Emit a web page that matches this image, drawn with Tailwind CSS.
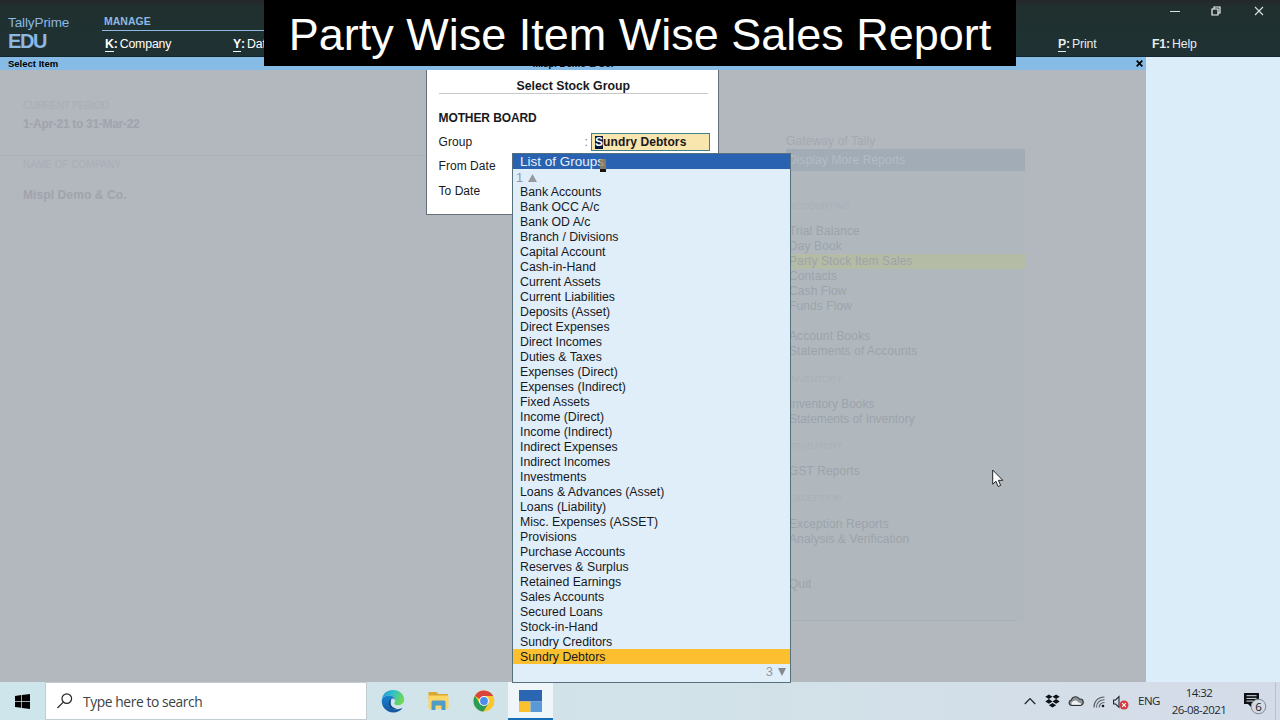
<!DOCTYPE html>
<html lang="en">

<head>
    <meta charset="UTF-8">
    <meta name="viewport" content="width=device-width, initial-scale=1.0">
    <script src="https://cdn.jsdelivr.net/npm/@tailwindcss/browser@4"></script>
    <title>TallyPrime EDU</title>
</head>

<body class="relative w-[1280px] h-[720px] overflow-hidden flex flex-col bg-[#b3b7be] font-['Liberation_Sans',sans-serif]">
    <!-- Top menu -->
    <header class="h-[57px] shrink-0 flex bg-linear-to-b from-[#24272c] via-[#20302f] via-15% to-[#1f3133] border-b border-[#14262e] text-white">
        <div class="w-[102px] pl-2 pt-[15px] text-[#8cb8e2]">
            <div class="text-[13.5px] leading-4 tracking-[-0.1px]">TallyPrime</div>
            <div class="text-[20px] leading-[20px] font-bold tracking-[-1.4px]">EDU</div>
        </div>
        <div class="w-[178px] pt-[14px]">
            <div class="h-[17px] pl-[2px] text-[10.5px] leading-[14px] font-bold text-[#8cb8e2] border-b border-[#8cb8e2]">MANAGE</div>
            <div class="flex pl-[3px] pt-[5px] text-[12.3px] leading-4 tracking-[-0.15px]">
                <div class="w-[128px] flex gap-[2px]"><b><span class="inline-block h-4 border-b border-white">K</span>:</b>Company</div>
                <div class="flex gap-[2px]"><b><span class="inline-block h-4 border-b border-white">Y</span>:</b>Data</div>
            </div>
        </div>
        <div class="ml-auto w-[222px] flex flex-col">
            <div class="h-[22px] flex items-center pl-[112px]">
                <svg class="w-[10px] h-[10px]" viewBox="0 0 10 10"><path d="M0 5.5h10" stroke="#dbe2e4"/></svg>
                <svg class="ml-[31px] w-[10px] h-[10px]" viewBox="0 0 10 10" fill="none" stroke="#f2f5f5" stroke-width="1.2"><path d="M1 3h6v6H1zM3 3V1h6v6H7"/></svg>
                <svg class="ml-[33px] w-[10px] h-[10px]" viewBox="0 0 10 10"><path d="M1 1l8 8M9 1L1 9" stroke="#dbe2e4" stroke-width="1.1"/></svg>
            </div>
            <div class="flex pt-[14px] text-[12.3px] leading-4 tracking-[-0.15px] text-[#e6eded]">
                <div class="w-[94px] flex gap-[2px]"><b><span class="inline-block h-4 border-b border-[#e6eded]">P</span>:</b>Print</div>
                <div class="flex gap-[2px]"><b>F1:</b>Help</div>
            </div>
        </div>
    </header>

    <main class="flex-1 flex min-h-0">
        <div class="w-[1146px] flex flex-col">
            <!-- Window title -->
            <div class="h-[13px] shrink-0 flex justify-between items-center bg-[#86bbe5] pl-2 pr-[3px] text-[9.5px] leading-[13px] font-bold text-black">
                <span>Select Item</span>
                <span class="pr-12">Mispl Demo &amp; Co.</span>
                <svg class="w-[7px] h-[7px]" viewBox="0 0 7 7"><path d="M.7.7l5.6 5.6M6.3.7L.7 6.3" stroke="#000" stroke-width="1.7"/></svg>
            </div>
            <div class="flex-1 flex">
                <!-- Company info -->
                <div class="w-[427px] pt-[29px] text-[#a0a4ac]">
                    <div class="pl-[23px] text-[10px] leading-[14px] tracking-[-0.3px] text-[#aaaeb6]">CURRENT PERIOD</div>
                    <div class="pl-[23px] pt-[3px] text-[12px] leading-4 font-bold tracking-[-0.3px]">1-Apr-21 to 31-Mar-22</div>
                    <div class="mt-[23px] border-t border-[#acb0b7] pl-[23px] pt-[1px] text-[10px] leading-[16px] text-[#aaaeb6]">NAME OF COMPANY</div>
                    <div class="pl-[23px] pt-[14px] text-[12px] leading-4 font-bold tracking-[0.1px]">Mispl Demo &amp; Co.</div>
                </div>
                <!-- Gateway menu behind the dialog -->
                <div class="ml-[359px] w-[239px] pt-[64px] text-[12px] leading-[15px] tracking-[0.1px] text-[#9da3aa]">
                    <div class="h-[15px] text-[#a4aab1]">Gateway of Tally</div>
                    <div class="h-[22px] leading-[22px] pl-[2px] bg-[#a1acb6] text-[#b2bcc5]">Display More Reports</div>
                    <div class="h-[450px] pl-[3px] bg-[#b0b8be]">
                        <div class="pt-[28px] h-[53px] text-[9px] leading-[14px] text-[#a9b0b7]">ACCOUNTING</div>
                        <div>Trial Balance</div>
                        <div>Day Book</div>
                        <div class="-ml-[3px] pl-[3px] bg-[#b5bca5]">Party Stock Item Sales</div>
                        <div>Contacts</div>
                        <div>Cash Flow</div>
                        <div>Funds Flow</div>
                        <div class="mt-[15px]">Account Books</div>
                        <div>Statements of Accounts</div>
                        <div class="pt-[13px] h-[38px] text-[9px] leading-[14px] text-[#a9b0b7]">INVENTORY</div>
                        <div class="tracking-[-0.05px]">Inventory Books</div>
                        <div class="tracking-[-0.05px]">Statements of Inventory</div>
                        <div class="pt-[12px] h-[37px] text-[9px] leading-[14px] text-[#a9b0b7]">STATUTORY</div>
                        <div>GST Reports</div>
                        <div class="pt-[12px] h-[38px] text-[9px] leading-[14px] text-[#a9b0b7]">EXCEPTION</div>
                        <div>Exception Reports</div>
                        <div>Analysis &amp; Verification</div>
                        <div class="mt-[30px]">Quit</div>
                        <div class="mt-[28px] mr-2 border-t border-[#a9b1b8]"></div>
                    </div>
                </div>
            </div>
        </div>
        <div class="flex-1 bg-[#dcedfa]"></div>
    </main>

    <!-- Taskbar -->
    <footer class="h-[38px] shrink-0 flex items-stretch bg-linear-to-r from-[#cde5eb] via-[#d2e3e9] to-[#d4dbe8] font-['Open_Sans','Noto_Sans',sans-serif] text-[#222a30]">
        <div class="w-[45px] flex items-center justify-center">
            <svg class="w-[15px] h-[15px]" viewBox="0 0 15 15" fill="#000"><path d="M0 2l6.3-.9v6H0zM7 1l8-1v7.1H7zM0 7.8h6.3v6L0 13zM7 7.8h8V15l-8-1.1z"/></svg>
        </div>
        <div class="w-[322px] flex items-center bg-white border border-[#c3cdd1] pl-[11px]">
            <svg class="w-4 h-4" viewBox="0 0 16 16" fill="none" stroke="#20272a" stroke-width="1.2"><circle cx="9.8" cy="5.6" r="4.8"/><path d="M6.3 9.1L.5 15"/></svg>
            <span class="ml-[10px] pt-[2px] text-[13.8px] tracking-[-0.4px] text-[#3c4345]">Type here to search</span>
        </div>
        <div class="flex items-center pl-[14px]">
            <svg class="w-6 h-6" viewBox="0 0 24 24">
                <defs>
                    <linearGradient id="edgeTop" x1="0" y1="0" x2="1" y2=".4"><stop offset="0" stop-color="#1c91d6"/><stop offset=".5" stop-color="#32bfc9"/><stop offset="1" stop-color="#6bd957"/></linearGradient>
                    <linearGradient id="edgeLow" x1="0" y1="0" x2="0" y2="1"><stop offset="0" stop-color="#1882d0"/><stop offset="1" stop-color="#14569f"/></linearGradient>
                </defs>
                <path d="M.8 11C1.5 4.5 6 .9 12 .9c7 0 11.2 4.8 11.2 9.7 0 3.5-2.7 5.6-5.8 5.6-2.8 0-4.2-.9-4.2-1.7 0-.6 1-1.2 1-3C14.2 8.6 11 6.5 7.5 6.5 4 6.5 1.5 8.3.8 11z" fill="url(#edgeTop)"/>
                <path d="M.8 11c.8-3 3.5-4.5 6.7-4.5 3.7 0 6.4 1.8 6.7 4.5-.8-1.2-1.8-1.7-3-1.3-2 .8-3.200 3.100-2.700 5.800.8 4 5.200 5.800 9.200 4.600 1.800-.6 3-1.200 3.800-1.200-2 2.800-5.300 4.500-9.100 4.500C5.500 23.400.2 18 .8 11z" fill="url(#edgeLow)"/>
                <path d="M10.300 9.900c-2 1-2.900 3.300-2.300 5.600.9 4 5.500 5.900 9.700 4.600-4.200-.3-8.200-2.500-8-6.200 0-1.800.2-3 .6-4z" fill="#0d4284"/>
            </svg>
            <svg class="ml-[23px] w-[21px] h-5" viewBox="0 0 21 20">
                <path d="M.5 1h8l2 2H20v5H.5z" fill="#dba832"/>
                <path d="M.5 4.500H20.500V18H.5z" fill="#fbd566"/>
                <path d="M3.500 19v-8q0-1.500 1.500-1.500h11q1.500 0 1.500 1.500v8h-4v-4.500h-6V19z" fill="#519bc9"/>
            </svg>
            <svg class="ml-[24px] w-[22px] h-[22px]" viewBox="0 0 22 22">
                <circle cx="11" cy="11" r="10.500" fill="#f8c832"/>
                <path d="M1.900 5.700A10.500 10.500 0 0 0 10.500 21.500L15.300 13.500 11 11 6.700 13.500z" fill="#2b9b57"/>
                <path d="M1.900 5.700L6.500 9 11 6H20.200A10.500 10.500 0 0 0 1.900 5.700z" fill="#d9453b"/>
                <circle cx="11" cy="11" r="5" fill="#f5f8fb"/>
                <circle cx="11" cy="11" r="3.900" fill="#4b8cee"/>
            </svg>
            <div class="ml-[13px] w-[45px] h-[38px] flex justify-center pt-[8px] bg-[#eff6fa] border-b-2 border-[#1670b8]">
                <svg class="w-[23px] h-[22px] shrink-0" viewBox="0 0 23 22"><path fill="#2b66b3" d="M0 0h23v11.500H0z"/><path fill="#fbc02e" d="M0 11.500h11.500V22H0z"/><path fill="#5a99d8" d="M11.500 11.500H23V22H11.500z"/></svg>
            </div>
        </div>
        <div class="ml-auto w-[256px] flex items-center">
            <svg class="w-3 h-2" viewBox="0 0 12 8" fill="none" stroke="#20272c" stroke-width="1.3"><path d="M.8 7L6 1.600 11.200 7"/></svg>
            <svg class="ml-[9px] w-[15px] h-[14px]" viewBox="0 0 15 14" fill="#0d1216"><path d="M3.900.5l3.600 2.300-3.600 2.300L.3 2.800zM11.100.5l3.600 2.300-3.600 2.300-3.600-2.300zM3.900 5.100l3.600 2.300-3.600 2.300L.3 7.400zM11.100 5.100l3.600 2.300-3.600 2.300-3.600-2.300zM7.500 8.900l3.600 2.300-3.600 2.300-3.600-2.300z"/></svg>
            <svg class="ml-2 w-4 h-3" viewBox="0 0 16 12"><path d="M3.500 10.500a2.800 2.800 0 0 1-.2-5.500A4.500 4.500 0 0 1 11.500 4a3.200 3.200 0 0 1 1 6.500z" fill="#8c9295" stroke="#2c3236" stroke-width="1.1"/><path d="M4 9.800q-1.500-2 .8-3.300Q8 4.500 10 7l3.500 1.800-.8 1z" fill="#eef2f4"/></svg>
            <svg class="ml-[9px] w-3 h-3 mt-[2px]" viewBox="0 0 12 12" fill="none" stroke="#596066" stroke-width="1.1"><path d="M1 11.500C.8 5.500 5 .9 11.500 1M3.500 11.500C3.500 7 6.500 3.700 11.500 3.800M6.200 11.500c0-2.900 2-5 5.300-5"/><circle cx="10" cy="10" r="1.3" fill="#15191c" stroke="none"/></svg>
            <svg class="ml-2 w-4 h-[15px] mt-[2px]" viewBox="0 0 16 15"><path d="M.6 5h2L6 1.500v10.800L2.600 9h-2z" fill="none" stroke="#20272c" stroke-width="1.1"/><circle cx="11" cy="10" r="4.5" fill="#d43b43"/><path d="M9.200 8.200l3.600 3.600M12.800 8.200l-3.600 3.600" stroke="#fff" stroke-width="1.2"/></svg>
            <span class="ml-[9px] w-[22px] text-[11.5px] tracking-[-0.5px]">ENG</span>
            <div class="ml-2 w-[62px] text-center text-[11.5px] leading-[17px] tracking-[-0.55px]">
                <div>14:32</div>
                <div>26-08-2021</div>
            </div>
            <svg class="ml-[13px] w-6 h-6 mt-[5px]" viewBox="0 0 24 24">
                <path d="M1 1h15v11H8v3l-3-3H1z" fill="#0d1115"/>
                <path d="M3.500 3.700h10M3.500 6.400h10M3.500 9.100h7" stroke="#d8dfe6" stroke-width="1"/>
                <circle cx="15.500" cy="14.500" r="7.300" fill="#d4dae2" stroke="#777e84" stroke-width=".9"/>
                <text x="15.500" y="18.500" text-anchor="middle" class="text-[11.5px] font-['Open_Sans']" fill="#15191c">6</text>
            </svg>
            <div class="ml-auto mr-1 h-full border-l border-[#b9c1cb]"></div>
        </div>
    </footer>

    <!-- Select Stock Group dialog -->
    <section class="absolute left-[426px] top-[70px] w-[293px] h-[145px] pl-[11.5px] pr-[10px] bg-white border border-t-0 border-[#65717a] text-[12px] leading-4 text-[#17191c]">
        <h2 class="h-6 pt-2 text-center text-[12.3px] font-bold border-b border-[#c5c8c8]">Select Stock Group</h2>
        <div class="mt-4 font-bold tracking-[-0.1px]">MOTHER BOARD</div>
        <div class="mt-[7px] mr-[-3px] flex items-center h-[18px] tracking-[0.05px]">
            <span class="w-[146px] shrink-0">Group</span>
            <span class="w-[6.5px] shrink-0 text-[#777]">:</span>
            <div class="w-[119px] shrink-0 h-[18px] pl-[3px] leading-4 font-bold bg-[#f9e5ae] border border-[#40808b] tracking-[0.1px]"><span class="inline-block bg-[#07193d] text-white leading-[13px]">S</span>undry Debtors</div>
        </div>
        <div class="mt-[7px] tracking-[0.05px]">From Date</div>
        <div class="mt-[9px] tracking-[0.05px]">To Date</div>
    </section>

    <!-- List of Groups -->
    <section class="absolute left-[512px] top-[153px] w-[279px] h-[530px] bg-[#e0eefa] border border-[#56717c] text-[12.3px] leading-[15px] text-[#17191c]">
        <h3 class="h-[15px] pl-[7px] bg-[#2862b0] text-[13.5px] text-[#e6f0fc]">List of Groups</h3>
        <div class="h-[15px] pl-[3px] pt-[2px] flex items-center gap-[5px] text-[13px] text-[#96999d]">1
            <svg class="w-[9px] h-[8px]" viewBox="0 0 9 8" fill="#96999d"><path d="M4.500 0L9 8H0z"/></svg>
        </div>
        <ul class="[&>li]:h-[15px] [&>li]:pl-[7px] leading-[17px]">
            <li>Bank Accounts</li>
            <li>Bank OCC A/c</li>
            <li>Bank OD A/c</li>
            <li>Branch / Divisions</li>
            <li>Capital Account</li>
            <li>Cash-in-Hand</li>
            <li>Current Assets</li>
            <li>Current Liabilities</li>
            <li>Deposits (Asset)</li>
            <li>Direct Expenses</li>
            <li>Direct Incomes</li>
            <li>Duties &amp; Taxes</li>
            <li>Expenses (Direct)</li>
            <li>Expenses (Indirect)</li>
            <li>Fixed Assets</li>
            <li>Income (Direct)</li>
            <li>Income (Indirect)</li>
            <li>Indirect Expenses</li>
            <li>Indirect Incomes</li>
            <li>Investments</li>
            <li>Loans &amp; Advances (Asset)</li>
            <li>Loans (Liability)</li>
            <li>Misc. Expenses (ASSET)</li>
            <li>Provisions</li>
            <li>Purchase Accounts</li>
            <li>Reserves &amp; Surplus</li>
            <li>Retained Earnings</li>
            <li>Sales Accounts</li>
            <li>Secured Loans</li>
            <li>Stock-in-Hand</li>
            <li>Sundry Creditors</li>
            <li class="bg-[#fbbf30]">Sundry Debtors</li>
        </ul>
        <div class="h-[15px] pr-[4px] flex items-center justify-end gap-[5px] text-[13px] text-[#96999d]">3
            <svg class="w-[8px] h-[8px]" viewBox="0 0 8 8" fill="#85898d"><path d="M0 0h8L4 8z"/></svg>
        </div>
    </section>

    <!-- Leftover of the text cursor -->
    <div class="absolute left-[600px] top-[159px] w-[6px] h-[13px] bg-[#a08350]/75 border-b-[3px] border-[#17130c]"></div>

    <!-- Mouse pointer -->
    <svg class="absolute left-[992px] top-[469px] w-3 h-[19px]" viewBox="0 0 12 19"><path d="M.7 1v14.200l3.200-3 2.300 5.300 2.500-1.100-2.300-5.100h4.400z" fill="#fff" stroke="#1e2226"/></svg>

    <!-- Video title -->
    <h1 class="absolute left-[264px] top-0 w-[752px] h-[66px] bg-black text-white text-center text-[45px] leading-[69px] whitespace-nowrap">Party Wise Item Wise Sales Report</h1>
</body>

</html>
